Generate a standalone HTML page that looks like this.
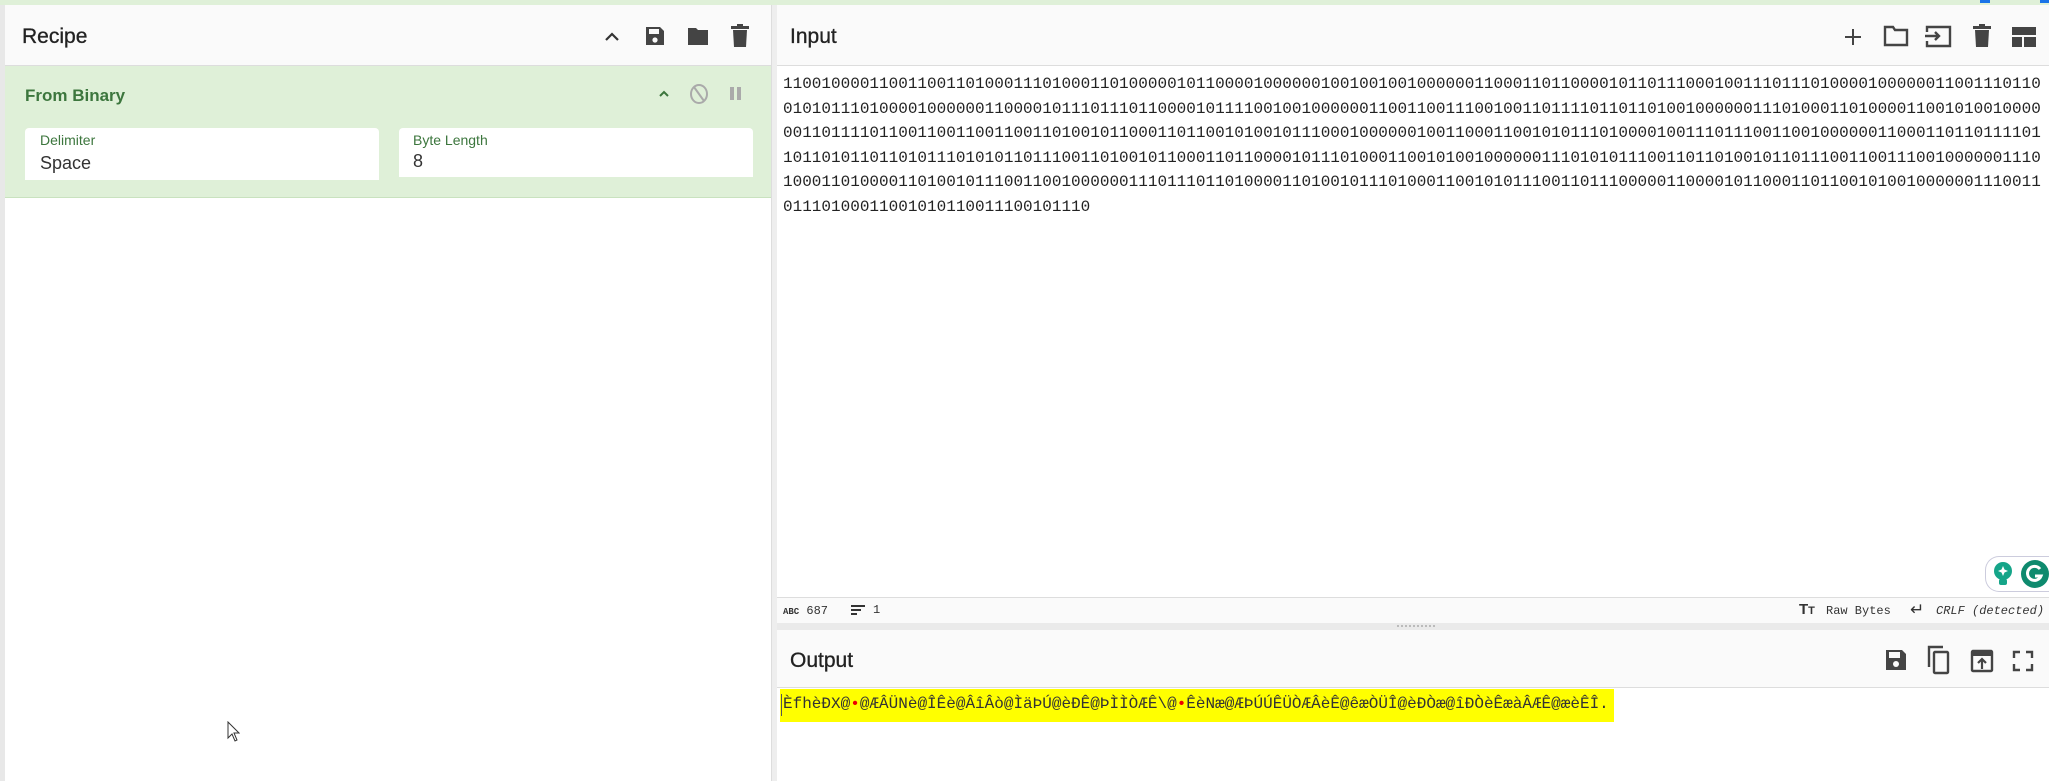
<!DOCTYPE html>
<html><head><meta charset="utf-8"><style>
*{box-sizing:border-box;margin:0;padding:0}
body{width:2049px;height:781px;overflow:hidden;background:#fff;font-family:"Liberation Sans",sans-serif;position:relative}
.a{position:absolute}
.hdr{background:#fafafa;border-bottom:1px solid #ddd}
.title{font-size:21px;color:#222;font-weight:normal;-webkit-text-stroke:0.3px #222}
.mono{font-family:"Liberation Mono",monospace}
svg{position:absolute}
</style></head><body>
<div class="a" style="left:0;top:0;width:2049px;height:5px;background:#dff0d8"></div>
<div class="a" style="left:1980px;top:0;width:10px;height:3px;background:#1a73e8"></div>
<div class="a" style="left:2040px;top:0;width:9px;height:3px;background:#1a73e8"></div>
<!-- left panel -->
<div class="a" style="left:0;top:5px;width:5px;height:776px;background:#e8e8e8"></div>
<div class="a hdr" style="left:5px;top:5px;width:766px;height:61px"></div>
<div class="a title" style="left:22px;top:25px">Recipe</div>
<svg style="left:603px;top:28px" width="18" height="18" viewBox="0 0 18 18"><path d="M3 12 L9 6 L15 12" stroke="#333" stroke-width="2.2" fill="none"/></svg>
<svg style="left:643px;top:24px" width="24" height="24" viewBox="0 0 24 24"><path d="M3 3h14l4 4v14H3z" fill="#444"/><rect x="6" y="5" width="10" height="5" fill="#fafafa"/><circle cx="12" cy="16" r="2.6" fill="#fafafa"/></svg>
<svg style="left:686px;top:24px" width="24" height="24" viewBox="0 0 24 24"><path d="M2 4h8l2 2h10v15H2z" fill="#444"/></svg>
<svg style="left:729px;top:23px" width="22" height="26" viewBox="0 0 22 26"><rect x="2" y="3" width="18" height="3" fill="#444"/><rect x="8" y="1" width="6" height="3" fill="#444"/><path d="M4 7h14l-1 17H5z" fill="#444"/></svg>
<div class="a" style="left:5px;top:66px;width:766px;height:132px;background:#dff0d8;border-bottom:1px solid #c9e2bf"></div>
<div class="a" style="left:25px;top:86px;font-size:17px;font-weight:bold;color:#3c763d">From Binary</div>
<svg style="left:657px;top:87px" width="14" height="14" viewBox="0 0 14 14"><path d="M3 9 L7 5 L11 9" stroke="#3c763d" stroke-width="2" fill="none"/></svg>
<svg style="left:689px;top:83px" width="20" height="22" viewBox="0 0 20 22"><ellipse cx="10" cy="11" rx="8" ry="9" stroke="#aaa" stroke-width="2" fill="none"/><path d="M5 4 L15 18" stroke="#aaa" stroke-width="2"/></svg>
<svg style="left:729px;top:85px" width="14" height="18" viewBox="0 0 14 18"><rect x="1" y="2" width="4" height="13" fill="#aaa"/><rect x="8" y="2" width="4" height="13" fill="#aaa"/></svg>
<div class="a" style="left:25px;top:128px;width:354px;height:52px;background:#fff;border-radius:4px 4px 0 0"></div>
<div class="a" style="left:40px;top:132px;font-size:14px;color:#3c763d">Delimiter</div>
<div class="a" style="left:40px;top:153px;font-size:18px;color:#333">Space</div>
<div class="a" style="left:399px;top:128px;width:354px;height:49px;background:#fff;border-radius:4px 4px 0 0"></div>
<div class="a" style="left:413px;top:132px;font-size:14px;color:#3c763d">Byte Length</div>
<div class="a" style="left:413px;top:151px;font-size:18px;color:#333">8</div>
<svg style="left:226px;top:721px" width="14" height="22" viewBox="0 0 14 22"><path d="M2 1 L2 17 L6 13 L9 20 L11 19 L8 12 L13 12 Z" fill="#fff" stroke="#333" stroke-width="1"/></svg>
<!-- divider -->
<div class="a" style="left:771px;top:5px;width:6px;height:776px;background:#eee;border-left:1px solid #ddd"></div>
<!-- input -->
<div class="a hdr" style="left:777px;top:5px;width:1272px;height:61px"></div>
<div class="a title" style="left:790px;top:25px">Input</div>
<svg style="left:1842px;top:26px" width="22" height="22" viewBox="0 0 22 22"><path d="M11 3v16M3 11h16" stroke="#444" stroke-width="2"/></svg>
<svg style="left:1883px;top:24px" width="26" height="24" viewBox="0 0 26 24"><path d="M2 3h8l2 3h12v15H2z" stroke="#444" stroke-width="2.4" fill="none"/></svg>
<svg style="left:1924px;top:24px" width="28" height="24" viewBox="0 0 28 24"><path d="M3 8V3h23v19H3v-5" stroke="#444" stroke-width="2.4" fill="none"/><path d="M1 12h14M11 8l4 4-4 4" stroke="#444" stroke-width="2.4" fill="none"/></svg>
<svg style="left:1972px;top:24px" width="20" height="24" viewBox="0 0 20 24"><rect x="1" y="2" width="18" height="3" fill="#444"/><rect x="7" y="0" width="6" height="3" fill="#444"/><path d="M3 6h14l-1 17H4z" fill="#444"/></svg>
<svg style="left:2011px;top:26px" width="26" height="22" viewBox="0 0 26 22"><rect x="1" y="1" width="24" height="8" fill="#444"/><rect x="1" y="11" width="10" height="10" fill="#444"/><rect x="13" y="11" width="12" height="10" fill="#444"/></svg>
<div class="a mono" style="left:783px;top:72px;font-size:16px;line-height:24.5px;color:#222;white-space:pre">11001000011001100110100011101000110100000101100001000000100100100100000011000110110000101101110001001110111010000100000011001110110
01010111010000100000011000010111011101100001011110010010000001100110011100100110111101101101001000000111010001101000011001010010000
00110111101100110011001100110100101100011011001010010111000100000010011000110010101110100001001110111001100100000011000110110111101
10110101101101011101010110111001101001011000110110000101110100011001010010000001110101011100110110100101101110011001110010000001110
10001101000011010010111001100100000011101110110100001101001011101000110010101110011011100000110000101100011011001010010000001110011
01110100011001010110011100101110</div>
<div class="a" style="left:1985px;top:556px;width:64px;height:36px;border:1px solid #ccd;border-right:none;border-radius:14px 0 0 14px;background:#fff"></div>
<svg style="left:1992px;top:561px" width="22" height="26" viewBox="0 0 22 26"><circle cx="11" cy="10" r="9" fill="#15a589"/><rect x="7" y="18" width="8" height="6" rx="2" fill="#15a589"/><path d="M11 5l1.5 3.5L16 10l-3.5 1.5L11 15l-1.5-3.5L6 10l3.5-1.5z" fill="#fff"/></svg>
<svg style="left:2020px;top:559px" width="29" height="30" viewBox="0 0 29 30"><circle cx="15" cy="15" r="14" fill="#0e8a6e"/><path d="M20 10a7 7 0 1 0 1 7h-6" stroke="#fff" stroke-width="3" fill="none"/></svg>
<div class="a" style="left:777px;top:597px;width:1272px;height:26px;background:#fafafa;border-top:1px solid #ddd"></div>
<div class="a mono" style="left:783px;top:604px;font-size:12px;color:#333"><b style="font-size:9px">ABC</b> 687</div>
<svg style="left:850px;top:604px" width="16" height="14" viewBox="0 0 16 14"><path d="M1 2h14M1 6h10M1 10h6" stroke="#333" stroke-width="2"/></svg>
<div class="a mono" style="left:873px;top:603px;font-size:12px;color:#333">1</div>
<div class="a" style="left:1799px;top:601px;font-size:15px;font-weight:bold;color:#333">T<span style="font-size:11px">T</span></div>
<div class="a mono" style="left:1826px;top:604px;font-size:12px;color:#333">Raw Bytes</div>
<div class="a" style="left:1910px;top:600px;font-size:17px;color:#333">↵</div>
<div class="a mono" style="left:1936px;top:604px;font-size:12px;color:#333;font-style:italic">CRLF (detected)</div>
<div class="a" style="left:777px;top:623px;width:1272px;height:7px;background:#eaeaea"></div>
<div class="a" style="left:1397px;top:625px;width:38px;height:2px;border-top:2px dotted #bbb"></div>
<!-- output -->
<div class="a hdr" style="left:777px;top:630px;width:1272px;height:58px"></div>
<div class="a title" style="left:790px;top:649px">Output</div>
<svg style="left:1884px;top:648px" width="24" height="24" viewBox="0 0 24 24"><path d="M2 2h16l4 4v16H2z" fill="#444"/><rect x="5" y="4" width="11" height="6" fill="#fafafa"/><circle cx="12" cy="16" r="3" fill="#fafafa"/></svg>
<svg style="left:1926px;top:645px" width="24" height="30" viewBox="0 0 24 30"><path d="M3 22V2h14" stroke="#444" stroke-width="2.4" fill="none"/><rect x="8" y="7" width="14" height="21" rx="1" stroke="#444" stroke-width="2.4" fill="none"/></svg>
<svg style="left:1970px;top:649px" width="24" height="24" viewBox="0 0 24 24"><rect x="2" y="2" width="20" height="20" rx="1" stroke="#444" stroke-width="2.4" fill="none"/><rect x="2" y="2" width="20" height="5" fill="#444"/><path d="M12 20v-9M8 14l4-4 4 4" stroke="#444" stroke-width="2.2" fill="none"/></svg>
<svg style="left:2012px;top:650px" width="22" height="22" viewBox="0 0 22 22"><path d="M2 8V2h6M14 2h6v6M20 14v6h-6M8 20H2v-6" stroke="#444" stroke-width="2.4" fill="none"/></svg>
<div class="a" style="left:780px;top:689px;width:834px;height:33px;background:#ffff00"></div>
<div class="a" style="left:781px;top:694px;width:1px;height:22px;background:#555"></div>
<div class="a mono" style="left:783px;top:695px;font-size:16px;color:#333;white-space:pre">ÈfhèÐX@<span style="color:#e00">•</span>@ÆÂÜNè@ÎÊè@ÂîÂò@ÌäÞÚ@èÐÊ@ÞÌÌÒÆÊ\@<span style="color:#e00">•</span>ÊèNæ@ÆÞÚÚÊÜÒÆÂèÊ@êæÒÜÎ@èÐÒæ@îÐÒèÊæàÂÆÊ@æèÊÎ.</div>
</body></html>
